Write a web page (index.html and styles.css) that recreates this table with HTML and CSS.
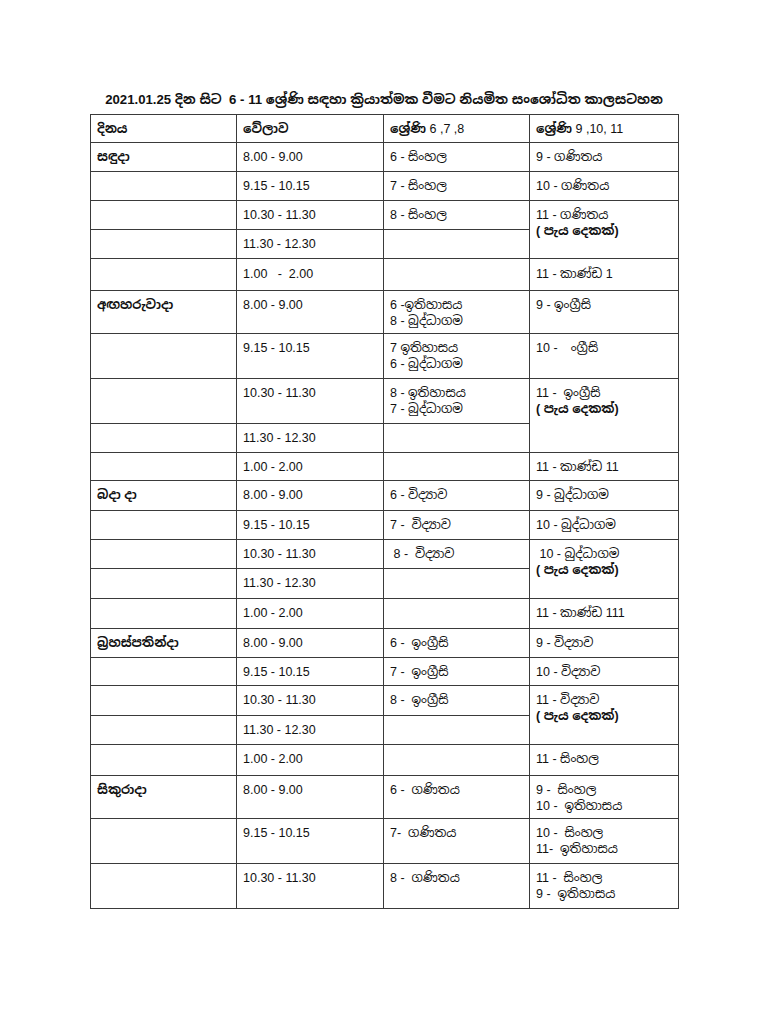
FILE: index.html
```html
<!DOCTYPE html>
<html lang="si">
<head>
<meta charset="utf-8">
<title>කාලසටහන</title>
<link rel="stylesheet" href="styles.css">
</head>
<body>
<div class="page">
  <h1 class="title">2021.01.25 දින සිට&nbsp; 6 - 11 ශ්‍රේණි සඳහා ක්‍රියාත්මක වීමට නියමිත සංශෝධිත කාලසටහන</h1>
  <table class="tt">
    <colgroup><col class="c1"><col class="c2"><col class="c3"><col class="c4"></colgroup>
    <tr class="head"><td>දිනය</td><td>වේලාව</td><td>ශ්‍රේණි <span class="num">6 ,7 ,8</span></td><td>ශ්‍රේණි <span class="num">9 ,10, 11</span></td></tr>

    <tr><td class="day">සඳුදා</td><td>8.00 - 9.00</td><td>6 - සිංහල</td><td>9 - ගණිතය</td></tr>
    <tr><td></td><td>9.15 - 10.15</td><td>7 - සිංහල</td><td>10 - ගණිතය</td></tr>
    <tr><td></td><td>10.30 - 11.30</td><td>8 - සිංහල</td><td rowspan="2">11 - ගණිතය<br><b>( පැය දෙකක්)</b></td></tr>
    <tr><td></td><td>11.30 - 12.30</td><td></td></tr>
    <tr class="h32"><td></td><td>1.00 &nbsp;&nbsp;- &nbsp;2.00</td><td></td><td>11 - කාණ්ඩ 1</td></tr>

    <tr class="h43"><td class="day">අඟහරුවාදා</td><td>8.00 - 9.00</td><td>6 -ඉතිහාසය<br>8 - බුද්ධාගම</td><td>9 - ඉංග්‍රීසි</td></tr>
    <tr><td></td><td>9.15 - 10.15</td><td>7 ඉතිහාසය<br>6 - බුද්ධාගම</td><td>10 - &nbsp;&nbsp;ංග්‍රීසි</td></tr>
    <tr><td></td><td>10.30 - 11.30</td><td>8 - ඉතිහාසය<br>7 - බුද්ධාගම</td><td rowspan="2">11 - &nbsp;ඉංග්‍රීසි<br><b>( පැය දෙකක්)</b></td></tr>
    <tr><td></td><td>11.30 - 12.30</td><td></td></tr>
    <tr class="h28"><td></td><td>1.00 - 2.00</td><td></td><td>11 - කාණ්ඩ 11</td></tr>

    <tr class="h30"><td class="day">බදා දා</td><td>8.00 - 9.00</td><td>6 - විද්‍යාව</td><td>9 - බුද්ධාගම</td></tr>
    <tr><td></td><td>9.15 - 10.15</td><td>7 - &nbsp;විද්‍යාව</td><td>10 - බුද්ධාගම</td></tr>
    <tr><td></td><td>10.30 - 11.30</td><td>&nbsp;8 - &nbsp;විද්‍යාව</td><td rowspan="2">&nbsp;10 - බුද්ධාගම<br><b>( පැය දෙකක්)</b></td></tr>
    <tr class="h30"><td></td><td>11.30 - 12.30</td><td></td></tr>
    <tr class="h30"><td></td><td>1.00 - 2.00</td><td></td><td>11 - කාණ්ඩ 111</td></tr>

    <tr><td class="day">බ්‍රහස්පතින්දා</td><td>8.00 - 9.00</td><td>6 - &nbsp;ඉංග්‍රීසි</td><td>9 - විද්‍යාව</td></tr>
    <tr class="h28"><td></td><td>9.15 - 10.15</td><td>7 - &nbsp;ඉංග්‍රීසි</td><td>10 - විද්‍යාව</td></tr>
    <tr class="h30"><td></td><td>10.30 - 11.30</td><td>8 - &nbsp;ඉංග්‍රීසි</td><td rowspan="2">11 - විද්‍යාව<br><b>( පැය දෙකක්)</b></td></tr>
    <tr><td></td><td>11.30 - 12.30</td><td></td></tr>
    <tr class="h31"><td></td><td>1.00 - 2.00</td><td></td><td>11 - සිංහල</td></tr>

    <tr class="h43"><td class="day">සිකුරාදා</td><td>8.00 - 9.00</td><td>6 - &nbsp;ගණිතය</td><td>9 - &nbsp;සිංහල<br>10 - &nbsp;ඉතිහාසය</td></tr>
    <tr><td></td><td>9.15 - 10.15</td><td>7- &nbsp;ගණිතය</td><td>10 - &nbsp;සිංහල<br>11- &nbsp;ඉතිහාසය</td></tr>
    <tr><td></td><td>10.30 - 11.30</td><td>8 - &nbsp;ගණිතය</td><td>11 - &nbsp;සිංහල<br>9 - &nbsp;ඉතිහාසය</td></tr>
  </table>
</div>
</body>
</html>
```

FILE: styles.css
```css
html, body {
  margin: 0;
  padding: 0;
  background: #ffffff;
}

body {
  font-family: "Liberation Sans", "Noto Sans Sinhala", "Noto Serif Sinhala", "Noto Sans", Arial, sans-serif;
  color: #111111;
}

.page {
  width: 588px;
  margin: 0 auto;
  padding-top: 90px;
}

.title {
  margin: 0 0 4px 0;
  font-size: 13.2px;
  line-height: 20px;
  font-weight: bold;
  text-align: center;
  white-space: nowrap;
}

.tt {
  width: 588px;
  border-collapse: collapse;
  table-layout: fixed;
  font-size: 12.5px;
  line-height: 16px;
}

.c1 { width: 146px; }
.c2 { width: 147px; }
.c3 { width: 146px; }
.c4 { width: 149px; }

.tt td {
  border: 1px solid #3a3a3a;
  padding: 6px 6px 6px 6px;
  height: 16px;
  vertical-align: top;
  white-space: nowrap;
}

.tt .head td {
  font-weight: bold;
  padding-top: 6px;
  padding-bottom: 5px;
}

.tt .head .num {
  font-weight: normal;
}

.tt .h28 td { padding-bottom: 5px; }
.tt .h30 td { padding-bottom: 7px; }
.tt .h31 td { padding-bottom: 8px; }
.tt .h32 td { padding-top: 7px; padding-bottom: 8px; }
.tt .h43 td { padding-bottom: 4px; }

.tt td.day {
  font-weight: bold;
}

.tt b {
  font-weight: bold;
}
```
